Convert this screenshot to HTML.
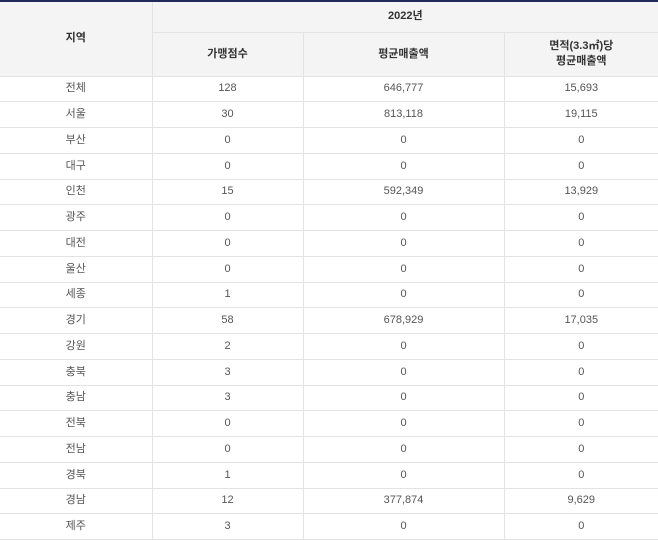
<!DOCTYPE html>
<html><head><meta charset="utf-8"><style>
html,body{margin:0;padding:0;background:#fff;width:658px;height:540px;overflow:hidden}
table{position:absolute;left:0;top:0;width:658px;border-collapse:collapse;table-layout:fixed;border-top:2px solid #1d2a5a;font-family:"Liberation Sans","Noto Sans CJK KR",sans-serif;font-size:11px;color:#555}
td,th{border:1px solid #e3e3e3;text-align:center;padding:0;line-height:15px}
tr td:first-child,tr th:first-child{border-left:none}
tr td:last-child,tr th:last-child{border-right:none}
th{background:#f4f4f4;color:#333;font-weight:bold}
tbody tr{height:25.75px}
</style></head><body>
<table>
<colgroup><col style="width:152px"><col style="width:151px"><col style="width:201px"><col style="width:154px"></colgroup>
<thead>
<tr style="height:31px"><th rowspan="2">지역</th><th colspan="3">2022년</th></tr>
<tr style="height:44px"><th>가맹점수</th><th>평균매출액</th><th>면적(3.3㎡)당<br>평균매출액</th></tr>
</thead>
<tbody>
<tr><td>전체</td><td>128</td><td>646,777</td><td>15,693</td></tr>
<tr><td>서울</td><td>30</td><td>813,118</td><td>19,115</td></tr>
<tr><td>부산</td><td>0</td><td>0</td><td>0</td></tr>
<tr><td>대구</td><td>0</td><td>0</td><td>0</td></tr>
<tr><td>인천</td><td>15</td><td>592,349</td><td>13,929</td></tr>
<tr><td>광주</td><td>0</td><td>0</td><td>0</td></tr>
<tr><td>대전</td><td>0</td><td>0</td><td>0</td></tr>
<tr><td>울산</td><td>0</td><td>0</td><td>0</td></tr>
<tr><td>세종</td><td>1</td><td>0</td><td>0</td></tr>
<tr><td>경기</td><td>58</td><td>678,929</td><td>17,035</td></tr>
<tr><td>강원</td><td>2</td><td>0</td><td>0</td></tr>
<tr><td>충북</td><td>3</td><td>0</td><td>0</td></tr>
<tr><td>충남</td><td>3</td><td>0</td><td>0</td></tr>
<tr><td>전북</td><td>0</td><td>0</td><td>0</td></tr>
<tr><td>전남</td><td>0</td><td>0</td><td>0</td></tr>
<tr><td>경북</td><td>1</td><td>0</td><td>0</td></tr>
<tr><td>경남</td><td>12</td><td>377,874</td><td>9,629</td></tr>
<tr><td>제주</td><td>3</td><td>0</td><td>0</td></tr>
</tbody>
</table>
</body></html>
